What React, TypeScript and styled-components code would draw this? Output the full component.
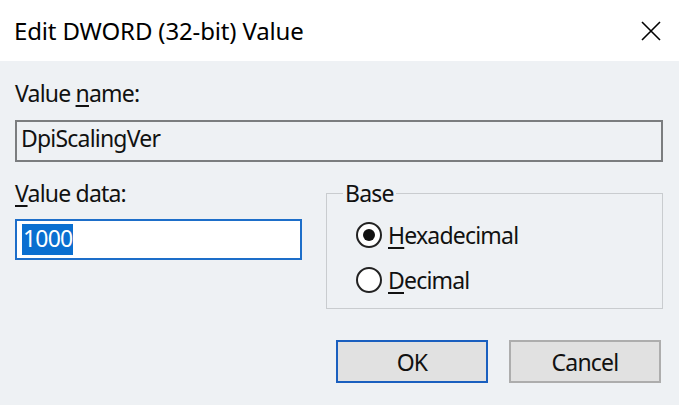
import React from "react";
import styled, { createGlobalStyle } from "styled-components";

const GlobalStyle = createGlobalStyle`
  html, body {
    margin: 0;
    padding: 0;
    background: #eef1f4;
  }
  body {
    font-family: "Noto Sans", "Open Sans", sans-serif;
    font-size: 23px;
    letter-spacing: -0.8px;
    color: #111;
  }
`;

const Dialog = styled.div`
  width: 679px;
  height: 405px;
  display: flex;
  flex-direction: column;
  overflow: hidden;
`;

const TitleBar = styled.div`
  height: 61px;
  flex: 0 0 auto;
  background: #fff;
  display: flex;
  align-items: center;
  justify-content: space-between;
  padding: 0 17px 0 14px;
`;

const Title = styled.span`
  font-size: 24px;
  letter-spacing: -0.15px;
  line-height: 32px;
  color: #000;
`;

const CloseButton = styled.button`
  width: 22px;
  height: 22px;
  padding: 0;
  border: none;
  background: transparent;
  display: flex;

  svg {
    width: 22px;
    height: 22px;
  }
`;

const Body = styled.div`
  flex: 1;
  background: #eef1f4;
  padding: 16px 16px 0 15px;
  display: flex;
  flex-direction: column;
`;

const Label = styled.div`
  line-height: 32px;
`;

const Key = styled.u`
  text-decoration-thickness: 1.5px;
  text-underline-offset: 3px;
`;

const ReadonlyField = styled.div`
  box-sizing: border-box;
  height: 42px;
  margin-top: 11px;
  border: 2px solid #7b7d7f;
  padding: 0 4px;
  line-height: 32px;
  background: #eef1f4;
`;

const Row = styled.div`
  display: flex;
  align-items: flex-start;
  gap: 24px;
  margin-top: 15px;
`;

const Column = styled.div`
  width: 287px;
  display: flex;
  flex-direction: column;
`;

const DataField = styled.div`
  box-sizing: border-box;
  height: 41px;
  margin-top: 10px;
  border: 2px solid #1d6ec9;
  background: #fff;
  padding: 3px 5px;
  display: flex;
`;

const Selected = styled.span`
  background: #0a6fd0;
  color: #fff;
  line-height: 28px;
  padding: 0 1px;
`;

const GroupBox = styled.fieldset`
  flex: 1;
  margin: 0;
  border: 1px solid #c9cccf;
  padding: 3px 0 6px 29px;
  min-width: 0;
`;

const Legend = styled.legend`
  margin-left: -13px;
  padding: 0 2px;
  line-height: 32px;
`;

const RadioRow = styled.label`
  height: 45px;
  display: flex;
  align-items: center;
  gap: 6px;
`;

const RadioCircle = styled.span<{ $checked?: boolean }>`
  box-sizing: border-box;
  width: 26px;
  height: 26px;
  border-radius: 50%;
  border: 2px solid #222;
  background: #fff;
  display: flex;
  align-items: center;
  justify-content: center;

  &::after {
    content: "";
    width: 12px;
    height: 12px;
    border-radius: 50%;
    background: #111;
    display: ${(p) => (p.$checked ? "block" : "none")};
  }
`;

const RadioText = styled.span`
  line-height: 32px;
`;

const Buttons = styled.div`
  display: flex;
  justify-content: flex-end;
  gap: 21px;
  margin-top: 31px;
  padding-right: 2px;
`;

const Button = styled.button<{ $default?: boolean }>`
  box-sizing: border-box;
  width: 152px;
  height: 43px;
  background: #e1e1e1;
  border: 2px solid ${(p) => (p.$default ? "#1a5fbf" : "#adadad")};
  font: inherit;
  letter-spacing: inherit;
  color: #111;
  padding: 0;
  line-height: 32px;
`;

export default function App(): React.ReactElement {
  return (
    <>
      <GlobalStyle />
      <Dialog>
        <TitleBar>
          <Title>Edit DWORD (32-bit) Value</Title>
          <CloseButton type="button" aria-label="Close">
            <svg viewBox="0 0 22 22">
              <path
                d="M2 2 L20 20 M20 2 L2 20"
                stroke="#000"
                strokeWidth="1.6"
                fill="none"
              />
            </svg>
          </CloseButton>
        </TitleBar>
        <Body>
          <Label>
            Value <Key>n</Key>ame:
          </Label>
          <ReadonlyField>DpiScalingVer</ReadonlyField>
          <Row>
            <Column>
              <Label>
                <Key>V</Key>alue data:
              </Label>
              <DataField>
                <Selected>1000</Selected>
              </DataField>
            </Column>
            <GroupBox>
              <Legend>Base</Legend>
              <RadioRow>
                <RadioCircle $checked />
                <RadioText>
                  <Key>H</Key>exadecimal
                </RadioText>
              </RadioRow>
              <RadioRow>
                <RadioCircle />
                <RadioText>
                  <Key>D</Key>ecimal
                </RadioText>
              </RadioRow>
            </GroupBox>
          </Row>
          <Buttons>
            <Button type="button" $default>
              OK
            </Button>
            <Button type="button">Cancel</Button>
          </Buttons>
        </Body>
      </Dialog>
    </>
  );
}
